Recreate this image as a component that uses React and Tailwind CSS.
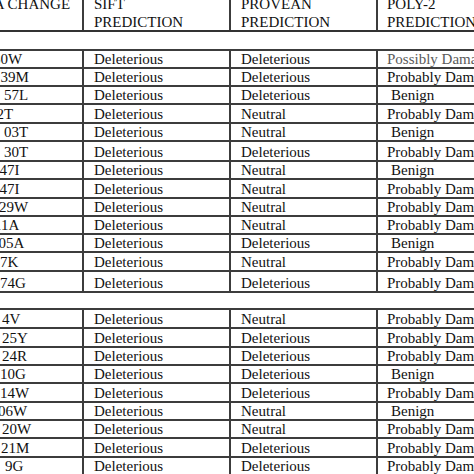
import React from "react";

const D = "Deleterious";
const N = "Neutral";
const PO = "possibly";
const PR = "probably";
const BE = "benign";

// label, left shift class, sift, provean, poly, row height class
const groupOne = [
  ["80W", "-ml-[7px]", D, D, PO, "h-[18.2px]"],
  ["139M", "-ml-[7px]", D, D, PR, "h-[18.3px]"],
  ["57L", "ml-[4px]", D, D, BE, "h-[18.3px]"],
  ["12T", "-ml-[11px]", D, N, PR, "h-[18.4px]"],
  ["03T", "ml-[4px]", D, N, BE, "h-[18.3px]"],
  ["30T", "ml-[4px]", D, D, PR, "h-[20px]"],
  ["147I", "-ml-[8px]", D, N, BE, "h-[18.3px]"],
  ["147I", "-ml-[8px]", D, N, PR, "h-[18.4px]"],
  ["129W", "-ml-[8.5px]", D, N, PR, "h-[18.3px]"],
  ["11A", "-ml-[6px]", D, N, PR, "h-[18px]"],
  ["105A", "-ml-[9px]", D, D, BE, "h-[18.3px]"],
  ["17K", "-ml-[7.5px]", D, N, PR, "h-[18.4px]"],
  ["174G", "-ml-[7.5px]", D, D, PR, "h-[21px]"],
];

const groupTwo = [
  ["4V", "ml-[2px]", D, N, PR, "h-[18.8px]"],
  ["25Y", "ml-[2px]", D, D, PR, "h-[18.4px]"],
  ["24R", "ml-[2px]", D, D, PR, "h-[18.3px]"],
  ["10G", "ml-0", D, D, BE, "h-[18.3px]"],
  ["14W", "ml-0", D, D, PR, "h-[18.4px]"],
  ["106W", "-ml-[9.5px]", D, N, BE, "h-[18.3px]"],
  ["20W", "ml-[2px]", D, N, PR, "h-[18.3px]"],
  ["21M", "ml-[1px]", D, D, PR, "h-[18.4px]"],
  ["9G", "ml-[5px]", D, D, PR, "h-[18.3px]"],
];

const PolyCell = ({ kind }) => {
  if (kind === PO) return <span className="text-[#5a5a5a]">Possibly Damaging</span>;
  if (kind === BE) return <span className="pl-[4px]">Benign</span>;
  return <span>Probably Damaging</span>;
};

const Row = ({ row }) => {
  const [label, shift, sift, provean, poly, h] = row;
  return (
    <div className={`flex ${h} border-b-2 border-[#3c3c3c]`}>
      <div className="w-[84px] shrink-0 overflow-hidden border-r-2 border-[#3c3c3c] flex items-end leading-[15px] whitespace-nowrap">
        <span className={shift}>{label}</span>
      </div>
      <div className="w-[147px] shrink-0 border-r-2 border-[#3c3c3c] pl-[10px] flex items-end leading-[15px] whitespace-nowrap">
        {sift}
      </div>
      <div className="w-[147px] shrink-0 border-r-2 border-[#3c3c3c] pl-[10px] flex items-end leading-[15px] whitespace-nowrap">
        {provean}
      </div>
      <div className="flex-1 overflow-hidden pl-[9px] flex items-end leading-[15px] whitespace-nowrap">
        <PolyCell kind={poly} />
      </div>
    </div>
  );
};

const Gap = ({ h }) => <div className={`${h} border-b-2 border-[#3c3c3c]`}></div>;

export default function App() {
  return (
    <div
      className="w-[474px] h-[474px] overflow-hidden bg-white text-[#111] text-[15px]"
      style={{ fontFamily: '"Liberation Serif", "Times New Roman", serif' }}
    >
      {/* header */}
      <div className="flex h-[32px] border-b-2 border-[#333] leading-[17.5px]">
        <div className="w-[84px] shrink-0 overflow-hidden border-r-2 border-[#3c3c3c] whitespace-nowrap">
          <div className="-mt-[4px] -ml-[17px]">AA CHANGE</div>
        </div>
        <div className="w-[147px] shrink-0 border-r-2 border-[#3c3c3c] pl-[10px]">
          <div className="-mt-[4px]">
            SIFT
            <br />
            PREDICTION
          </div>
        </div>
        <div className="w-[147px] shrink-0 border-r-2 border-[#3c3c3c] pl-[10px]">
          <div className="-mt-[4px]">
            PROVEAN
            <br />
            PREDICTION
          </div>
        </div>
        <div className="flex-1 overflow-hidden pl-[9px] whitespace-nowrap">
          <div className="-mt-[4px]">
            POLY-2
            <br />
            PREDICTION
          </div>
        </div>
      </div>

      <Gap h="h-[18.5px]" />
      {groupOne.map((r, i) => (
        <Row key={"a" + i} row={r} />
      ))}

      <Gap h="h-[17.8px]" />
      {groupTwo.map((r, i) => (
        <Row key={"b" + i} row={r} />
      ))}
    </div>
  );
}
